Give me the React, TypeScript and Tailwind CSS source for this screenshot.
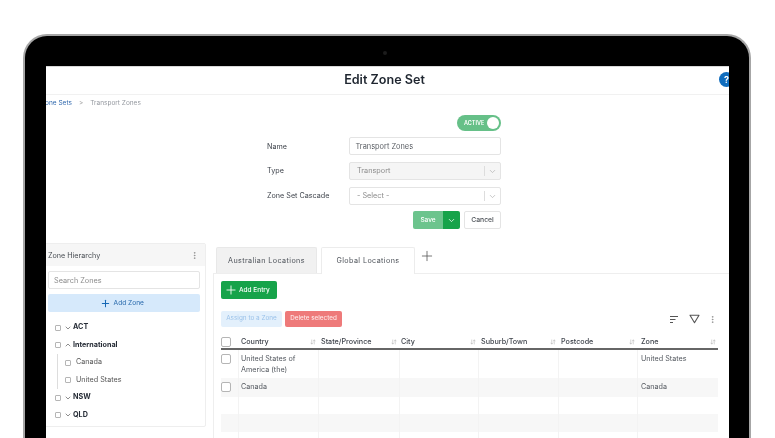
import { ChevronDown, ChevronUp, EllipsisVertical, Plus, ArrowDownUp } from "lucide-react";

const columns = [
  { name: "Country", pad: "pl-[3px]" },
  { name: "State/Province", pad: "pl-[3px]" },
  { name: "City", pad: "pl-[2px]" },
  { name: "Suburb/Town", pad: "pl-[3px]" },
  { name: "Postcode", pad: "pl-[3px]" },
  { name: "Zone", pad: "pl-[4px]" },
];

const rows = [
  { country: "United States of America (the)", zone: "United States", height: "h-[28px]", shaded: false, check: true },
  { country: "Canada", zone: "Canada", height: "h-[19px]", shaded: true, check: true },
  { country: "", zone: "", height: "h-[17px]", shaded: false, check: false },
  { country: "", zone: "", height: "h-[18px]", shaded: true, check: false },
  { country: "", zone: "", height: "h-[18px]", shaded: false, check: false },
];

function Box({ className }: { className: string }) {
  return <span className={`block shrink-0 border border-[#b5b5b5] bg-white ${className}`} />;
}

function SelectField({ value, disabled }: { value: string; disabled?: boolean }) {
  return (
    <div className={`flex h-[18px] items-center rounded-[2px] border border-[#e4e4e4] pl-[7px] ${disabled ? "bg-[#f5f5f5]" : "bg-white"}`}>
      <span className="flex-1 text-[7.3px] text-[#8c8c8c]">{value}</span>
      <span className="h-[10px] w-px bg-[#dddddd]" />
      <ChevronDown className="mx-[3px] h-[9px] w-[9px] text-[#b5b5b5]" />
    </div>
  );
}

function TreeRow({ label, open }: { label: string; open?: boolean }) {
  return (
    <div className="flex h-[17.5px] items-center">
      <Box className="h-[6px] w-[6px] rounded-[1px]" />
      {open ? (
        <ChevronUp className="ml-[3px] h-[8px] w-[8px] text-[#555555]" />
      ) : (
        <ChevronDown className="ml-[3px] h-[8px] w-[8px] text-[#555555]" />
      )}
      <span className="ml-[1px] text-[7.2px] font-bold text-[#262c36]">{label}</span>
    </div>
  );
}

function ChildRow({ label }: { label: string }) {
  return (
    <div className="flex h-[17.5px] items-center">
      <Box className="h-[6px] w-[6px] rounded-[1px]" />
      <span className="ml-[5px] text-[7.2px] text-[#555555]">{label}</span>
    </div>
  );
}

export default function App() {
  return (
    <div className="h-[438px] w-[775px] overflow-hidden bg-white pl-[23px] pt-[34px] font-['Inter',sans-serif]">
      {/* device frame */}
      <div className="relative h-[404px] w-[728px] rounded-t-[24px] border-2 border-b-0 border-[#a6a6a6] bg-black pl-[21px] pr-[20px] pt-[30px]">
        <span className="absolute left-[358px] top-[15px] h-[4px] w-[4px] rounded-full bg-[#1c1c1c]" />
        <div className="h-full overflow-hidden border-t border-[#d8d8d8] bg-white blur-[0.3px]">
          <div className="ml-[-29px] w-[735px]">
            {/* title bar */}
            <div className="relative flex h-[28px] items-center justify-center border-b border-[#f1f1f1]">
              <h1 className="text-[12.6px] font-semibold text-[#1f2630]">Edit Zone Set</h1>
              <span className="absolute right-[18px] top-[5px] flex h-[15px] w-[15px] items-center justify-center rounded-full bg-[#0f6cbd] text-[9px] font-bold text-white">
                ?
              </span>
            </div>

            {/* breadcrumb */}
            <div className="flex h-[16px] items-center pl-[24px] pt-[2px] text-[6.5px]">
              <span className="text-[#2f68ad]">Zone Sets</span>
              <span className="ml-[7px] text-[#a9a9a9]">&gt;</span>
              <span className="ml-[7px] text-[#94989f]">Transport Zones</span>
            </div>

            {/* form */}
            <div className="ml-[250px] mt-[4px] w-[234px]">
              <div className="flex justify-end">
                <div className="flex h-[16px] w-[44px] items-center justify-between rounded-full bg-[#66c088] pl-[7px] pr-[2px]">
                  <span className="text-[5.5px] font-semibold text-white">ACTIVE</span>
                  <span className="h-[12px] w-[12px] rounded-full bg-white" />
                </div>
              </div>
              <div className="mt-[6px] flex flex-col gap-[7px]">
                <div className="flex items-center">
                  <label className="w-[82px] pt-[2px] text-[7.2px] text-[#3f444c]">Name</label>
                  <div className="flex h-[18px] flex-1 items-center rounded-[2px] border border-[#e4e4e4] pl-[5.5px] pt-[1px] text-[7.4px] text-[#5a5e64]">
                    Transport Zones
                  </div>
                </div>
                <div className="flex items-center">
                  <label className="w-[82px] text-[7.2px] text-[#3f444c]">Type</label>
                  <div className="flex-1">
                    <SelectField value="Transport" disabled />
                  </div>
                </div>
                <div className="flex items-center">
                  <label className="w-[82px] text-[7.2px] text-[#3f444c]">Zone Set Cascade</label>
                  <div className="flex-1">
                    <SelectField value="- Select -" />
                  </div>
                </div>
              </div>
              <div className="mt-[6px] flex justify-end gap-[4px]">
                <div className="flex h-[18px] overflow-hidden rounded-[2px]">
                  <span className="flex w-[30px] items-center justify-center bg-[#6cc48d] pt-[1px] text-[6.5px] font-medium text-white">Save</span>
                  <span className="flex w-[17px] items-center justify-center bg-[#16a34a]">
                    <ChevronDown className="h-[9px] w-[9px] text-white" />
                  </span>
                </div>
                <span className="flex h-[18px] w-[37px] items-center justify-center rounded-[2px] border border-[#e4e4e4] text-[6.8px] font-medium text-[#4a4f55]">
                  Cancel
                </span>
              </div>
            </div>

            {/* lower area */}
            <div className="mt-[14px] flex items-start gap-[7px]">
              {/* zone hierarchy */}
              <div className="h-[184px] w-[189px] shrink-0 rounded-[2px] border border-[#eeeeee]">
                <div className="flex h-[22px] items-center justify-between bg-[#f6f6f6] pl-[30px] pr-[6px]">
                  <span className="pt-[2px] text-[7.2px] text-[#484d53]">Zone Hierarchy</span>
                  <EllipsisVertical className="h-[9px] w-[9px] text-[#8a8a8a]" />
                </div>
                <div className="pl-[30px] pr-[5px] pt-[5px]">
                  <div className="flex h-[18px] items-center rounded-[2px] border border-[#e4e4e4] pl-[5px] pt-[2px] text-[7.3px] text-[#8c8c8c]">
                    Search Zones
                  </div>
                  <div className="mt-[5px] flex h-[18px] items-center justify-center rounded-[2px] bg-[#d6e9fb] pr-[4px] text-[6.6px] text-[#2668ab]">
                    <Plus className="mr-[2.5px] h-[11px] w-[11px] text-[#1668b5]" strokeWidth={2.2} />
                    <span className="pt-[1px]">Add Zone</span>
                  </div>
                  <div className="mt-[7px] pl-[7px]">
                    <TreeRow label="ACT" />
                    <TreeRow label="International" open />
                    <div className="ml-[2px] border-l border-[#dddddd] pl-[7px]">
                      <ChildRow label="Canada" />
                      <ChildRow label="United States" />
                    </div>
                    <TreeRow label="NSW" />
                    <TreeRow label="QLD" />
                  </div>
                </div>
              </div>

              {/* locations */}
              <div className="w-[524px] pt-[4px]">
                <div className="flex items-end pl-[3px]">
                  <div className="flex h-[26px] w-[101px] items-center justify-center rounded-t-[2px] border border-b-0 border-[#e8e8e8] bg-[#f1f1f1] pt-[1px] text-[7.2px] tracking-[0.4px] text-[#4c5158]">
                    Australian Locations
                  </div>
                  <div className="z-10 ml-[4px] mb-[-1px] flex h-[27px] w-[94px] items-center justify-center rounded-t-[2px] border border-b-0 border-[#ececec] bg-white pt-[1px] text-[7.2px] tracking-[0.4px] text-[#4c5158]">
                    Global Locations
                  </div>
                  <Plus className="mb-[9px] ml-[4px] h-[16px] w-[16px] text-[#555555]" strokeWidth={1.2} />
                </div>
                <div className="h-[200px] border-l border-t border-[#eeeeee] pl-[7px] pt-[7px]">
                  <div className="flex h-[18px] w-[56px] items-center rounded-[2px] bg-[#16a34a] pl-[3px] text-[6.5px] font-medium text-white">
                    <Plus className="mr-[1px] h-[14px] w-[14px]" strokeWidth={1.5} />
                    <span className="pt-[1px]">Add Entry</span>
                  </div>
                  <div className="mt-[12px] flex w-[497px] items-center">
                    <span className="flex h-[16px] w-[61px] items-center justify-center rounded-[2px] bg-[#e3f0fc] text-[6.4px] text-[#9cc3ea]">
                      Assign to a Zone
                    </span>
                    <span className="ml-[3px] flex h-[16px] w-[57px] items-center justify-center rounded-[2px] bg-[#ee7a7a] text-[6.3px] font-medium text-[#fde6e6]">
                      Delete selected
                    </span>
                    <div className="ml-auto flex items-center text-[#555555]">
                      <svg width="10" height="9" viewBox="0 0 10 9" fill="none" stroke="currentColor" strokeWidth="1">
                        <path d="M1 1.5h8M1 4.5h5.5M1 7.5h3" />
                      </svg>
                      <svg className="ml-[10px]" width="11" height="10" viewBox="0 0 11 10" fill="none" stroke="currentColor" strokeWidth="1.1" strokeLinejoin="round">
                        <path d="M1 1.3h9L5.5 8.7z" />
                      </svg>
                      <EllipsisVertical className="ml-[8px] mr-[1px] h-[9px] w-[9px] text-[#8a8a8a]" />
                    </div>
                  </div>

                  {/* table */}
                  <div className="mt-[8px] w-[497px]">
                    <div className="grid h-[15px] grid-cols-[17px_80px_81px_79px_80px_79px_81px] items-center border-b-2 border-[#666666]">
                      <Box className="h-[10px] w-[10px] rounded-[2px]" />
                      {columns.map((col) => (
                        <div key={col.name} className={`flex items-center justify-between pr-[2px] pt-[1px] ${col.pad}`}>
                          <span className="text-[7.2px] font-medium text-[#3f444c]">{col.name}</span>
                          <ArrowDownUp className="h-[6px] w-[6px] text-[#aaaaaa]" />
                        </div>
                      ))}
                    </div>
                    {rows.map((row, i) => (
                      <div
                        key={i}
                        className={`grid grid-cols-[17px_80px_81px_79px_80px_79px_81px] ${row.height} ${row.shaded ? "bg-[#f7f7f7]" : "bg-white"}`}
                      >
                        <div className="pt-[4px]">{row.check && <Box className="h-[10px] w-[10px] rounded-[2px]" />}</div>
                        <div className="border-l border-[#f3f3f3] pl-[2px] pr-[8px] pt-[3px] text-[7.2px] leading-[11px] text-[#53585f]">{row.country}</div>
                        <div className="border-l border-[#f3f3f3]" />
                        <div className="border-l border-[#f3f3f3]" />
                        <div className="border-l border-[#f3f3f3]" />
                        <div className="border-l border-[#f3f3f3]" />
                        <div className="border-l border-[#f3f3f3] pl-[3px] pt-[3px] text-[7.2px] leading-[11px] text-[#53585f]">{row.zone}</div>
                      </div>
                    ))}
                  </div>
                </div>
              </div>
            </div>
          </div>
        </div>
      </div>
    </div>
  );
}
